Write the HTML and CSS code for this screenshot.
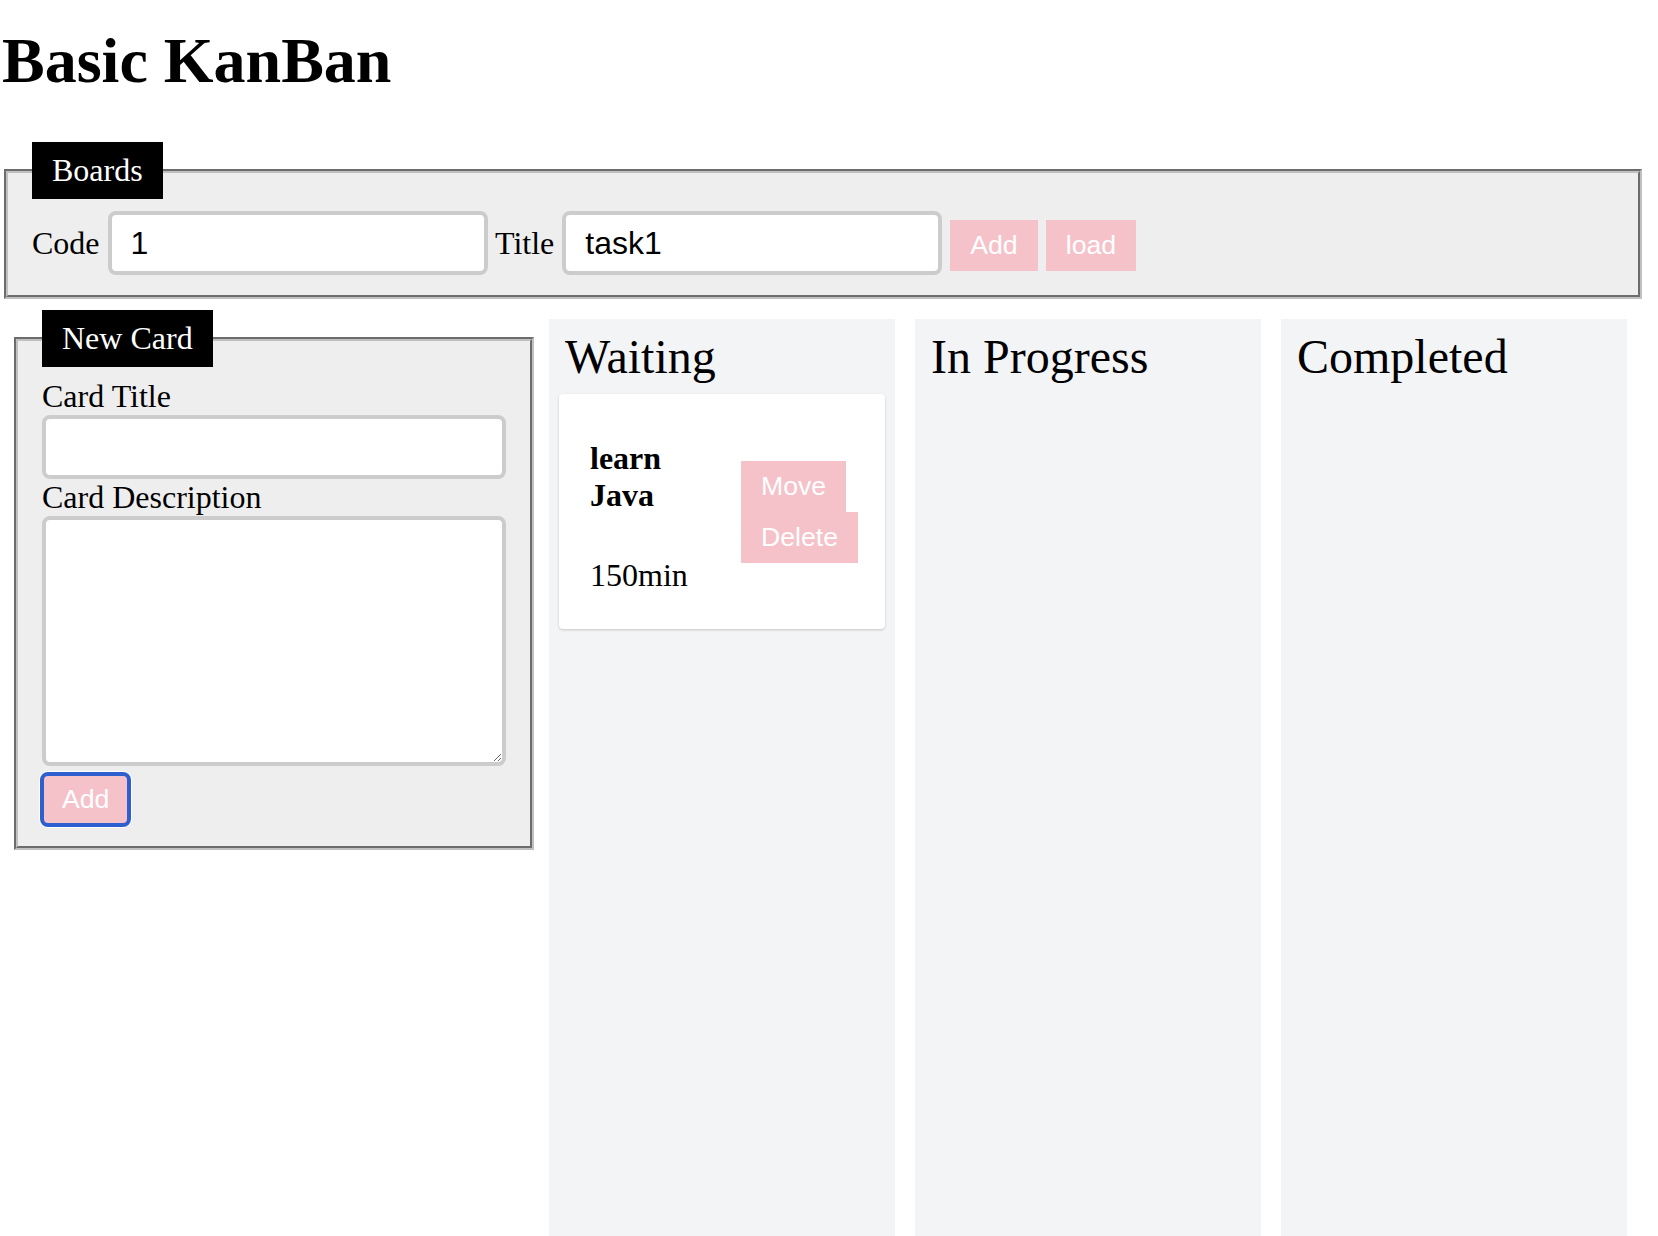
FILE: index.html
```html
<!DOCTYPE html>
<html lang="en">
<head>
<meta charset="utf-8">
<title>Basic KanBan</title>
<link rel="stylesheet" href="styles.css">
</head>
<body>
<h1 class="page-title">Basic KanBan</h1>
<fieldset class="panel boards">
  <legend class="tag">Boards</legend>
  <label class="inline-label">Code</label> <input class="field field-inline" type="text" value="1"> <label class="inline-label">Title</label> <input class="field field-inline" type="text" value="task1"> <button class="btn">Add</button> <button class="btn">load</button>
</fieldset>
<div class="workspace">
  <fieldset class="panel new-card">
    <legend class="tag">New Card</legend>
    <label class="block-label">Card Title</label>
    <input class="field field-full" type="text">
    <label class="block-label">Card Description</label>
    <textarea class="field field-area"></textarea>
    <button class="btn btn-focus">Add</button>
  </fieldset>
  <div class="board">
    <section class="column">
      <h2 class="column-title">Waiting</h2>
      <div class="card">
        <div class="card-info">
          <div class="card-title">learn Java</div>
          <div class="card-time">150min</div>
        </div>
        <div class="card-actions">
          <button class="btn">Move</button>
          <button class="btn">Delete</button>
        </div>
      </div>
    </section>
    <section class="column">
      <h2 class="column-title">In Progress</h2>
    </section>
    <section class="column">
      <h2 class="column-title">Completed</h2>
    </section>
  </div>
</div>
</body>
</html>
```
FILE: styles.css
```css
html, body {
  margin: 0;
  padding: 0;
  background: #ffffff;
  color: #000000;
  font-family: "Liberation Serif", "Times New Roman", serif;
}

.page-title {
  font: bold 64px/74px "Liberation Serif", "Times New Roman", serif;
  margin: 24px 0 44px 2px;
}

.panel {
  box-sizing: border-box;
  background: #eeeeee;
  border: 4px groove #c0c0c0;
  padding: 12px 24px 20px;
  font-size: 32px;
  line-height: 37px;
  min-width: 0;
}

.boards {
  margin: 0 16px 0 4px;
}

.tag {
  background: #000000;
  color: #ffffff;
  padding: 10px 20px;
  font-size: 32px;
  line-height: 37px;
}

.inline-label {
  font-size: 32px;
}

.field {
  box-sizing: border-box;
  font: 32px/37px "Liberation Sans", Arial, sans-serif;
  color: #000000;
  background: #ffffff;
  border: 4px solid #cccccc;
  border-radius: 8px;
  padding: 9.5px 19px;
  height: 64px;
  outline: none;
  margin: 0;
}

.field-inline {
  width: 380px;
}

.btn {
  font: 26.67px/31px "Liberation Sans", Arial, sans-serif;
  padding: 10px 20px;
  border: 0;
  border-radius: 0;
  background: #f5c2ca;
  color: #ffffff;
  margin: 0;
}

.workspace {
  display: flex;
  align-items: flex-start;
  padding-left: 14px;
  margin-top: 11px;
}

.new-card {
  flex: none;
  width: 520px;
  margin: 0 15px 0 0;
  padding-top: 11px;
  padding-bottom: 21px;
}

.block-label {
  display: block;
  line-height: 37px;
}

.field-full {
  display: block;
  width: 100%;
}

.field-area {
  display: block;
  width: 100%;
  height: 250px;
  margin-bottom: 8px;
}

.btn-focus {
  display: block;
  border-radius: 6px;
  outline: 4px solid #2d5fcf;
  outline-offset: -2px;
  box-shadow: 0 0 0 3px #ffffff;
}

.board {
  display: flex;
  gap: 20px;
  margin-top: 9px;
}

.column {
  box-sizing: border-box;
  flex: none;
  width: 346px;
  height: 918px;
  padding: 10px;
  background: #f3f4f6;
}

.column-title {
  font: 400 48px/55px "Liberation Serif", "Times New Roman", serif;
  margin: 0 0 10px;
  padding-left: 6px;
}

.card {
  box-sizing: border-box;
  display: flex;
  align-items: flex-start;
  height: 235px;
  padding: 46px 0 0 31px;
  background: #ffffff;
  border-radius: 4px;
  box-shadow: 0 1px 3px rgba(0, 0, 0, 0.14), 0 1px 2px rgba(0, 0, 0, 0.06);
  font-size: 32px;
  line-height: 37px;
}

.card-info {
  flex: none;
  width: 151px;
}

.card-title {
  font-weight: bold;
  max-width: 120px;
}

.card-time {
  margin-top: 43px;
}

.card-actions {
  display: flex;
  flex-direction: column;
  align-items: flex-start;
  margin-top: 21px;
}
```
